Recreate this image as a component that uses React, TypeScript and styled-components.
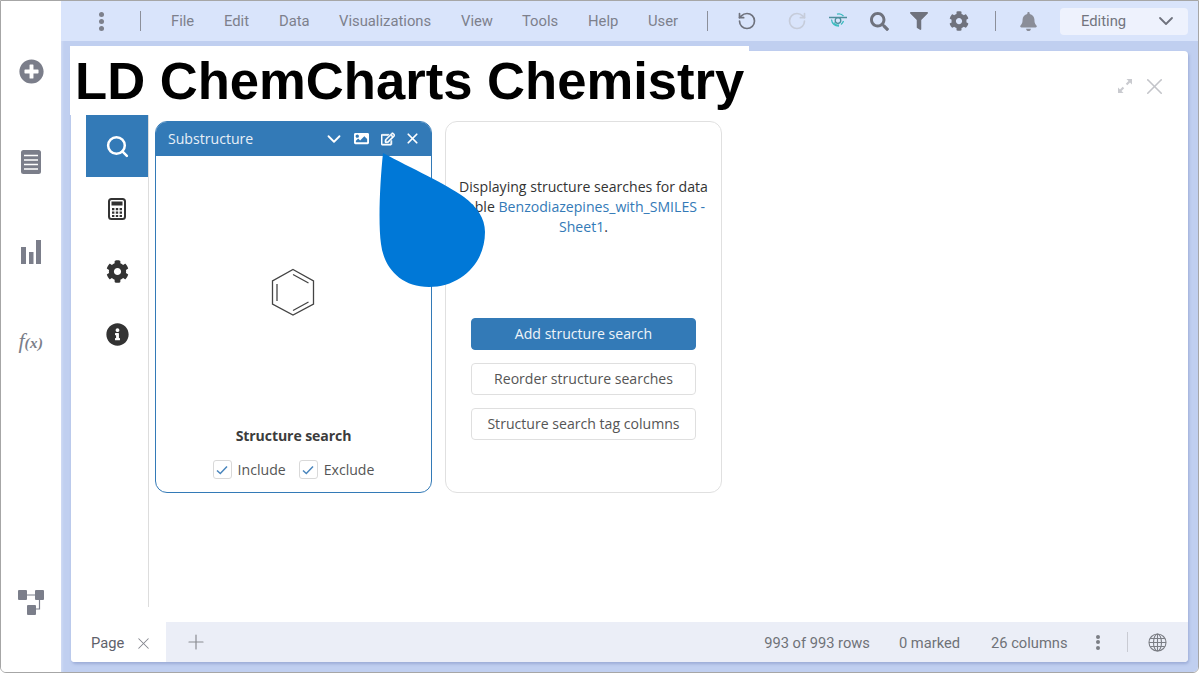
import React from 'react';
import styled, { createGlobalStyle } from 'styled-components';
import { FaPlusCircle, FaCog, FaInfoCircle, FaSearch, FaFilter, FaBell, FaImage, FaRegEdit } from 'react-icons/fa';
import { ChevronDown, RotateCcw, RotateCw, X, Plus, Search } from 'lucide-react';

const Global = createGlobalStyle`
  html, body { margin: 0; padding: 0; background: #fff; }
  #root { width: 1199px; height: 673px; overflow: hidden; }
  * { box-sizing: border-box; }
`;

const Frame = styled.div`
  position: relative;
  width: 1199px;
  height: 673px;
  display: flex;
  background: #fff;
  border: 1px solid #a6a6a6;
  border-radius: 0 0 6px 6px;
  overflow: hidden;
  font-family: Roboto, "Liberation Sans", sans-serif;
`;

const Rail = styled.nav`
  width: 60px;
  flex: none;
  display: flex;
  flex-direction: column;
  align-items: center;
  color: #7b7e8a;
  padding-top: 58px;
  background: #fff;
`;

const RailSlot = styled.div<{ $h: number }>`
  height: ${p => p.$h}px;
  display: flex;
  justify-content: center;
  width: 100%;
`;

const FxMark = styled.span`
  font-family: "Liberation Serif", serif;
  font-style: italic;
  font-size: 22px;
  line-height: 24px;
  color: #7b7e8a;
  small {
    font-size: 15px;
    font-weight: 700;
    letter-spacing: 0.5px;
  }
`;

const Workspace = styled.main`
  flex: 1;
  min-width: 0;
  display: flex;
  flex-direction: column;
  background: #c0cff0;
  box-shadow: inset 3px 0 3px -2px #d5dff5;
`;

const Toolbar = styled.header`
  height: 40px;
  flex: none;
  display: flex;
  align-items: center;
  background: #d9e4fb;
  color: #7d808c;
  font-size: 14.8px;
  padding-left: 38px;
`;

const Dots = styled.span<{ $size: number; $gap: number; $color: string }>`
  display: inline-flex;
  flex-direction: column;
  flex: none;
  gap: ${p => p.$gap}px;
  i {
    display: block;
    width: ${p => p.$size}px;
    height: ${p => p.$size}px;
    border-radius: 50%;
    background: ${p => p.$color};
  }
`;

const Divider = styled.span<{ $ml: number; $mr: number; $color: string }>`
  width: 1px;
  height: 20px;
  background: ${p => p.$color};
  margin-left: ${p => p.$ml}px;
  margin-right: ${p => p.$mr}px;
  flex: none;
`;

const MenuItem = styled.span<{ $w: number }>`
  width: ${p => p.$w}px;
  flex: none;
  white-space: nowrap;
`;

const ToolIcon = styled.span<{ $w: number; $color?: string }>`
  width: ${p => p.$w}px;
  flex: none;
  display: flex;
  justify-content: center;
  align-items: center;
  color: ${p => p.$color || '#6f727d'};
`;

const ModeSelect = styled.div`
  width: 128px;
  height: 27px;
  margin-left: 22.5px;
  background: #eef2fd;
  border-radius: 4px;
  display: flex;
  align-items: center;
  justify-content: space-between;
  padding: 0 10px 0 21px;
  color: #72757f;
  font-size: 14.8px;
`;

const Stage = styled.div`
  flex: 1;
  min-height: 0;
  padding: 10px;
  display: flex;
`;

const Sheet = styled.section`
  flex: 1;
  min-width: 0;
  background: #fff;
  border-radius: 4px;
  display: flex;
  flex-direction: column;
  overflow: hidden;
  box-shadow: 1px 2px 3px rgba(90, 110, 170, 0.35);
`;

const SheetTop = styled.div`
  height: 64px;
  flex: none;
  display: flex;
  align-items: center;
  justify-content: flex-end;
  gap: 8px;
  padding: 6px 20.5px 0 0;
  color: #c3c4c9;
`;

const SheetBody = styled.div`
  flex: 1;
  min-height: 0;
  display: flex;
  padding-bottom: 15px;
`;

const SideTabs = styled.div`
  width: 78px;
  flex: none;
  padding-left: 15px;
  border-right: 1px solid #dddddd;
  display: flex;
  flex-direction: column;
`;

const SideTab = styled.div<{ $active?: boolean }>`
  height: ${p => (p.$active ? 62 : 63)}px;
  display: flex;
  align-items: center;
  justify-content: center;
  background: ${p => (p.$active ? '#337ab7' : 'transparent')};
  color: ${p => (p.$active ? '#fff' : '#333')};
`;

const Cards = styled.div`
  display: flex;
  gap: 13px;
  padding: 6px 0 0 6px;
`;

const Card = styled.article<{ $accent?: boolean }>`
  width: 277px;
  height: 372px;
  border: 1px solid ${p => (p.$accent ? '#337ab7' : '#e0e0e0')};
  border-radius: 12px;
  background: #fff;
  display: flex;
  flex-direction: column;
  overflow: hidden;
  font-family: "Open Sans", "Noto Sans", sans-serif;
  font-size: 14.1px;
  color: #333;
`;

const CardHeader = styled.div`
  height: 34px;
  flex: none;
  background: #337ab7;
  color: #e8f0f7;
  display: flex;
  align-items: center;
  padding: 0 10px 1px 12px;
`;

const HeaderTitle = styled.span`
  flex: 1;
`;

const HeaderIcons = styled.div`
  display: flex;
  align-items: center;
  gap: 9px;
  color: #fff;
  svg:nth-child(2) { margin-right: 3px; }
  svg:nth-child(3) { stroke: currentColor; stroke-width: 24px; }
`;

const Sketch = styled.div`
  height: 240px;
  flex: none;
  display: flex;
  align-items: flex-start;
  justify-content: center;
  padding: 111px 2px 0 0;
`;

const SearchName = styled.div`
  margin-top: 30px;
  text-align: center;
  font-weight: 700;
  line-height: 20px;
  letter-spacing: -0.1px;
  color: #3c3c3c;
`;

const CheckRow = styled.div`
  margin-top: 14px;
  display: flex;
  justify-content: center;
  gap: 13px;
`;

const CheckLabel = styled.label`
  display: flex;
  align-items: center;
  gap: 6px;
  color: #555;
`;

const CheckBox = styled.span`
  width: 19px;
  height: 19px;
  border: 1px solid #d9d9d9;
  border-radius: 3px;
  display: flex;
  align-items: center;
  justify-content: center;
`;

const Info = styled.p`
  margin: 55px 0 0;
  padding: 0 10px;
  height: 140.5px;
  text-align: center;
  line-height: 20px;
  color: #333;
`;

const DataLink = styled.span`
  color: #337ab7;
`;

const Actions = styled.div`
  display: flex;
  flex-direction: column;
  gap: 13px;
  padding: 0 25px;
`;

const ActionButton = styled.button<{ $primary?: boolean }>`
  height: 32px;
  width: 100%;
  border-radius: 4px;
  border: 1px solid ${p => (p.$primary ? '#337ab7' : '#dfdfdf')};
  background: ${p => (p.$primary ? '#337ab7' : '#fff')};
  color: ${p => (p.$primary ? '#eef4f9' : '#555')};
  font-family: inherit;
  font-size: 14.1px;
  padding: 0;
`;

const StatusBar = styled.footer`
  height: 40px;
  flex: none;
  display: flex;
  align-items: center;
  background: #ebeef7;
  font-size: 14.7px;
  color: #6f7278;
  padding-right: 21px;
`;

const PageTab = styled.div`
  width: 95px;
  height: 100%;
  flex: none;
  background: #fff;
  display: flex;
  align-items: center;
  padding: 2px 0 0 20px;
  color: #5f626b;
  gap: 10px;
`;

const AddTab = styled.span`
  margin-left: 18px;
  flex: 1;
  color: #8a8c92;
  display: flex;
  align-items: center;
`;

const Stat = styled.span<{ $mr: number }>`
  margin-right: ${p => p.$mr}px;
  padding-top: 1px;
  white-space: nowrap;
`;

const Heading = styled.h1`
  position: absolute;
  left: 69px;
  top: 45px;
  width: 679px;
  height: 69px;
  margin: 0;
  padding: 0 0 0 5px;
  background: #fff;
  color: #000;
  font-family: "Liberation Sans", Arial, sans-serif;
  font-weight: 700;
  font-size: 52.6px;
  line-height: 70px;
  white-space: nowrap;
`;

const Drop = styled.svg`
  position: absolute;
  left: 375px;
  top: 151px;
`;

const DocIcon = () => (
  <svg width="22" height="26" viewBox="0 0 22 26">
    <rect x="1" y="1" width="20" height="24" rx="2.5" fill="#7b7e8a" />
    <path d="M4 6.5h14M4 11h14M4 15.5h14M4 20h14" stroke="#fff" strokeWidth="1.6" />
  </svg>
);

const BarsIcon = () => (
  <svg width="22" height="26" viewBox="0 0 22 26" fill="#7b7e8a">
    <rect x="1" y="8" width="5" height="17" />
    <rect x="9" y="13" width="4.5" height="12" />
    <rect x="16" y="1" width="5" height="24" />
  </svg>
);

const FlowIcon = () => (
  <svg width="27" height="27" viewBox="0 0 27 27" fill="#7b7e8a">
    <rect x="0" y="1" width="9" height="10" rx="1" />
    <rect x="17" y="1" width="9" height="10" rx="1" />
    <rect x="9" y="16" width="9" height="10" rx="1" />
    <path d="M9 6h8M21.5 11v9H18" fill="none" stroke="#7b7e8a" strokeWidth="1.2" />
  </svg>
);

const CalcIcon = () => (
  <svg width="18" height="22" viewBox="0 0 18 22">
    <rect x="1" y="1" width="16" height="20" rx="2.5" fill="none" stroke="#333" strokeWidth="2" />
    <rect x="3.5" y="3.5" width="11" height="4" fill="#333" />
    <path d="M4 10h2.4v2.2H4zM7.8 10h2.4v2.2H7.8zM11.6 10H14v2.2h-2.4zM4 13.6h2.4v2.2H4zM7.8 13.6h2.4v2.2H7.8zM11.6 13.6H14v2.2h-2.4zM4 17h2.4v2H4zM7.8 17h2.4v2H7.8zM11.6 17H14v2h-2.4z" fill="#333" />
  </svg>
);

const TealMark = () => (
  <svg width="20" height="16" viewBox="0 0 20 16" fill="none" stroke="#3cbcc0">
    <path d="M1 4.500h18" stroke="#4d8f9c" strokeWidth="1.300" />
    <circle cx="10" cy="7.500" r="2.800" stroke="#4d8f9c" strokeWidth="1.300" />
    <path d="M3.500 6.500c.5 4 3.500 6.500 7.500 6.500M6 9.500c1 2 3 3 5 2.500M15.500 8c-.5 1.500-1 2.500-2.500 3.500M9 1.200c2.500-.7 5 0 6.500 2" strokeWidth="1.300" />
  </svg>
);

const GlobeIcon = () => (
  <svg width="19" height="19" viewBox="0 0 19 19" fill="none" stroke="#7b7e85" strokeWidth="1.100">
    <circle cx="9.500" cy="9.500" r="8.500" />
    <ellipse cx="9.500" cy="9.500" rx="4" ry="8.500" />
    <path d="M9.500 1v17M1 9.500h17M2.200 5.500h14.600M2.200 13.500h14.600" />
  </svg>
);

const ExpandIcon = () => (
  <svg width="16" height="16" viewBox="0 0 16 16" fill="#c9cacf">
    <path d="M9.500 1H15v5.500l-2-2-2.700 2.700-1.500-1.500L11.500 3zM6.500 15H1V9.500l2 2 2.700-2.700 1.500 1.500L4.500 13z" />
  </svg>
);

const Benzene = () => (
  <svg width="46" height="50" viewBox="0 0 46 50" fill="none" stroke="#444" strokeWidth="1.300">
    <path d="M23 2.500 43.500 14v23L23 48 2.500 37V14z" />
    <path d="M7 17v17M23 7.500 38.500 16M38.500 35 23 43.500" />
  </svg>
);

const Tick = () => (
  <svg width="12" height="10" viewBox="0 0 12 10" fill="none" stroke="#4a86bd" strokeWidth="1.500">
    <path d="M1 5.500 4.300 8.500 11 1.500" />
  </svg>
);

const menu: [string, number][] = [
  ['File', 53], ['Edit', 55], ['Data', 60], ['Visualizations', 122],
  ['View', 61], ['Tools', 66], ['Help', 60], ['User', 59],
];

export default function App() {
  return (
    <Frame>
      <Global />
      <Rail>
        <RailSlot $h={90}><FaPlusCircle size={25} /></RailSlot>
        <RailSlot $h={90}><DocIcon /></RailSlot>
        <RailSlot $h={90}><BarsIcon /></RailSlot>
        <RailSlot $h={260}><FxMark>f<small>(x)</small></FxMark></RailSlot>
        <RailSlot $h={40}><FlowIcon /></RailSlot>
      </Rail>
      <Workspace>
        <Toolbar>
          <Dots $size={5} $gap={2} $color="#7d808c"><i /><i /><i /></Dots>
          <Divider $ml={36} $mr={30} $color="#8c8f9a" />
          {menu.map(([label, w]) => (
            <MenuItem key={label} $w={w}>{label}</MenuItem>
          ))}
          <Divider $ml={0} $mr={14} $color="#8c8f9a" />
          <ToolIcon $w={50}><RotateCcw size={20} strokeWidth={2} /></ToolIcon>
          <ToolIcon $w={50} $color="#c6ccda"><RotateCw size={20} strokeWidth={2} /></ToolIcon>
          <ToolIcon $w={32}><TealMark /></ToolIcon>
          <ToolIcon $w={50}><FaSearch size={19} /></ToolIcon>
          <ToolIcon $w={30}><FaFilter size={18} /></ToolIcon>
          <ToolIcon $w={50}><FaCog size={20} /></ToolIcon>
          <Divider $ml={11} $mr={22.5} $color="#8c8f9a" />
          <ToolIcon $w={19} $color="#8a8d98"><FaBell size={19} /></ToolIcon>
          <ModeSelect>
            Editing
            <ChevronDown size={24} strokeWidth={1.800} color="#6f727d" />
          </ModeSelect>
        </Toolbar>
        <Stage>
          <Sheet>
            <SheetTop>
              <ExpandIcon />
              <X size={27} strokeWidth={1.400} />
            </SheetTop>
            <SheetBody>
              <SideTabs>
                <SideTab $active><Search size={25} strokeWidth={2.400} /></SideTab>
                <SideTab><CalcIcon /></SideTab>
                <SideTab><FaCog size={23} /></SideTab>
                <SideTab><FaInfoCircle size={23} /></SideTab>
              </SideTabs>
              <Cards>
                <Card $accent>
                  <CardHeader>
                    <HeaderTitle>Substructure</HeaderTitle>
                    <HeaderIcons>
                      <ChevronDown size={22} strokeWidth={2} />
                      <FaImage size={15} />
                      <FaRegEdit size={14} />
                      <X size={17} strokeWidth={2.400} />
                    </HeaderIcons>
                  </CardHeader>
                  <Sketch><Benzene /></Sketch>
                  <SearchName>Structure search</SearchName>
                  <CheckRow>
                    <CheckLabel><CheckBox><Tick /></CheckBox>Include</CheckLabel>
                    <CheckLabel><CheckBox><Tick /></CheckBox>Exclude</CheckLabel>
                  </CheckRow>
                </Card>
                <Card>
                  <Info>
                    Displaying structure searches for data table{' '}
                    <DataLink>Benzodiazepines_with_SMILES -</DataLink>{' '}
                    <DataLink>Sheet1</DataLink>.
                  </Info>
                  <Actions>
                    <ActionButton $primary>Add structure search</ActionButton>
                    <ActionButton>Reorder structure searches</ActionButton>
                    <ActionButton>Structure search tag columns</ActionButton>
                  </Actions>
                </Card>
              </Cards>
            </SheetBody>
            <StatusBar>
              <PageTab>Page <X size={19} strokeWidth={1.300} color="#83858c" /></PageTab>
              <AddTab><Plus size={24} strokeWidth={1.200} /></AddTab>
              <Stat $mr={29}>993 of 993 rows</Stat>
              <Stat $mr={31}>0 marked</Stat>
              <Stat $mr={28}>26 columns</Stat>
              <Dots $size={4} $gap={1.500} $color="#7b7e85"><i /><i /><i /></Dots>
              <Divider $ml={27.500} $mr={20} $color="#c9cbd3" />
              <GlobeIcon />
            </StatusBar>
          </Sheet>
        </Stage>
      </Workspace>
      <Heading>LD ChemCharts Chemistry</Heading>
      <Drop width="112" height="136" viewBox="0 0 112 136">
        <path d="M7 1C35 16 70 32 88 45C101 55 109 66 109 80C109 112 84 135 53 135C25 135 8 116 5 92C2 70 4 30 7 1Z" fill="#0078d7" />
      </Drop>
    </Frame>
  );
}
